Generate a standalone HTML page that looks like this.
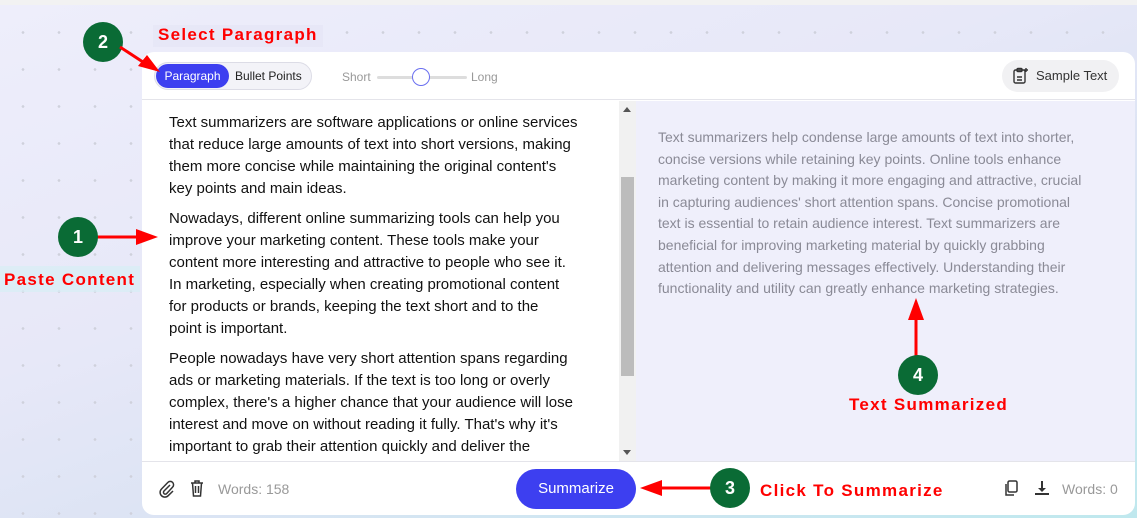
<!DOCTYPE html>
<html><head><style>
*{margin:0;padding:0;box-sizing:border-box}
body{width:1137px;height:518px;overflow:hidden;position:relative;font-family:"Liberation Sans",sans-serif;
background:linear-gradient(160deg,#eeeefb 0%,#e7e8f8 40%,#dde4f4 60%,#bfe8ee 100%);}
.topband{position:absolute;left:0;top:0;width:1137px;height:5px;background:#f2f2f2}
.dots{position:absolute;inset:0;background-image:radial-gradient(circle,#cfd1dc 1.2px,transparent 1.5px);background-size:36px 37px;background-position:5px 14px}
.card{position:absolute;left:142px;top:52px;width:993px;height:463px;background:#fff;border-radius:12px;overflow:hidden}
.hdr{position:absolute;left:0;top:0;width:100%;height:48px;border-bottom:1px solid #e4e4ea}
.tog{position:absolute;left:12px;top:10px;width:158px;height:28px;border:1px solid #dcdce6;border-radius:14px;background:#f3f3f8}
.tog .a{position:absolute;left:1px;top:1px;width:73px;height:24px;border-radius:12px;background:#3d3ff0;color:#fff;font-size:12px;line-height:24px;text-align:center}
.tog .b{position:absolute;left:80px;top:1px;font-size:12px;line-height:24px;color:#222}
.sl{position:absolute;top:18px;font-size:12px;color:#999}
.track{position:absolute;left:235px;top:24px;width:90px;height:3px;background:#ddd;border-radius:2px}
.knob{position:absolute;left:270px;top:16px;width:18px;height:18px;border-radius:50%;border:1.5px solid #6a6ff0;background:#fff}
.samp{position:absolute;right:16px;top:8px;width:117px;height:32px;border-radius:16px;background:#f1f1f3;font-size:13px;color:#333;line-height:32px;padding-left:34px}
.left{position:absolute;left:0;top:49px;width:477px;height:360px;overflow:hidden}
.left p{position:absolute;left:27px;width:450px;font-size:15px;line-height:22px;color:#111;white-space:nowrap}
.sb{position:absolute;left:477px;top:49px;width:17px;height:360px;background:#f1f1f1}
.thumb{position:absolute;left:2px;top:76px;width:13px;height:199px;background:#bcbcbc}
.right{position:absolute;left:494px;top:49px;width:499px;height:360px;background:#efeffb}
.right p{position:absolute;left:22px;top:26px;width:470px;font-size:14px;line-height:21.6px;color:#8a8a96;white-space:nowrap}
.ftr{position:absolute;left:0;top:409px;width:100%;height:54px;border-top:1px solid #e4e4ea}
.btn{position:absolute;left:374px;top:7px;width:120px;height:40px;border-radius:20px;background:#3d3ff0;color:#fff;font-size:15px;text-align:center;line-height:40px}
.w{position:absolute;top:19px;font-size:14px;color:#999}
.ann{position:absolute;font-weight:900;color:#f00;font-size:17px;letter-spacing:1.3px}
.circ{position:absolute;width:40px;height:40px;border-radius:50%;background:#0a6b35;color:#fff;font-weight:bold;font-size:18px;text-align:center;line-height:40px}
</style></head><body>
<div class="topband"></div>
<div class="dots"></div>
<div class="card">
 <div class="hdr">
  <div class="tog"><div class="a">Paragraph</div><div class="b">Bullet Points</div></div>
  <div class="sl" style="left:200px">Short</div>
  <div class="track"></div><div class="knob"></div>
  <div class="sl" style="left:329px">Long</div>
  <div class="samp"><svg style="position:absolute;left:10px;top:7px" width="18" height="18" viewBox="0 0 18 18" fill="none" stroke="#333" stroke-width="1.4"><rect x="2" y="3" width="11" height="13" rx="1.5"/><rect x="5" y="1.5" width="5" height="3" rx="1"/><path d="M5 10h5M5 13h5M14 1v4M12 3h4"/></svg>Sample Text</div>
 </div>
 <div class="left">
  <p style="top:11px">Text summarizers are software applications or online services<br>that reduce large amounts of text into short versions, making<br>them more concise while maintaining the original content's<br>key points and main ideas.</p>
  <p style="top:107px">Nowadays, different online summarizing tools can help you<br>improve your marketing content. These tools make your<br>content more interesting and attractive to people who see it.<br>In marketing, especially when creating promotional content<br>for products or brands, keeping the text short and to the<br>point is important.</p>
  <p style="top:247px">People nowadays have very short attention spans regarding<br>ads or marketing materials. If the text is too long or overly<br>complex, there's a higher chance that your audience will lose<br>interest and move on without reading it fully. That's why it's<br>important to grab their attention quickly and deliver the</p>
 </div>
 <div class="sb"><div style="position:absolute;left:4px;top:6px;border:4px solid transparent;border-bottom:5px solid #555;border-top:0"></div><div class="thumb"></div><div style="position:absolute;left:4px;bottom:6px;border:4px solid transparent;border-top:5px solid #555;border-bottom:0"></div></div>
 <div class="right"><p>Text summarizers help condense large amounts of text into shorter,<br>concise versions while retaining key points. Online tools enhance<br>marketing content by making it more engaging and attractive, crucial<br>in capturing audiences' short attention spans. Concise promotional<br>text is essential to retain audience interest. Text summarizers are<br>beneficial for improving marketing material by quickly grabbing<br>attention and delivering messages effectively. Understanding their<br>functionality and utility can greatly enhance marketing strategies.</p></div>
 <div class="ftr">
  <svg style="position:absolute;left:17px;top:18px" width="16" height="18" viewBox="0 0 16 18" fill="none" stroke="#333" stroke-width="1.5"><path d="M11 5l-6 6a1.8 1.8 0 0 0 2.6 2.6l6-6.5a3.3 3.3 0 0 0-4.7-4.7L2.5 9a4.7 4.7 0 0 0 6.7 6.7L14 11"/></svg>
  <svg style="position:absolute;left:48px;top:18px" width="14" height="17" viewBox="0 0 14 17" fill="none" stroke="#333" stroke-width="1.5"><path d="M1 3h12M5 3V1h4v2M2.5 3l1 13h7l1-13M5.5 6v7M8.5 6v7"/></svg>
  <div class="w" style="left:76px">Words: 158</div>
  <div class="btn">Summarize</div>
  <svg style="position:absolute;left:862px;top:18px" width="14" height="17" viewBox="0 0 14 17" fill="none" stroke="#333" stroke-width="1.5"><rect x="4" y="1" width="9" height="11" rx="1.5"/><path d="M2 4v11h8"/></svg>
  <svg style="position:absolute;left:892px;top:18px" width="16" height="16" viewBox="0 0 16 16" fill="#333"><path d="M7 1h2v7h3l-4 4-4-4h3z"/><rect x="1" y="13" width="14" height="2"/></svg>
  <div class="w" style="left:920px">Words: 0</div>
 </div>
</div>
<div style="position:absolute;left:153px;top:25px;width:170px;height:22px;background:rgba(230,230,245,.7)"></div>
<div class="ann" style="left:158px;top:25px">Select Paragraph</div>
<div class="circ" style="left:83px;top:22px">2</div>
<svg style="position:absolute;left:0;top:0" width="1137" height="518"><g stroke="#f00" stroke-width="3" fill="#f00">
<line x1="120" y1="47" x2="146" y2="64"/><polygon points="160,72 138,66 147,55" stroke="none"/>
<line x1="95" y1="237" x2="137" y2="237"/><polygon points="158,237 136,229 136,245" stroke="none"/>
<line x1="712" y1="488" x2="660" y2="488"/><polygon points="640,488 662,480 662,496" stroke="none"/>
<line x1="916" y1="356" x2="916" y2="318"/><polygon points="916,298 908,320 924,320" stroke="none"/>
</g></svg>
<div class="circ" style="left:58px;top:217px">1</div>
<div style="position:absolute;left:0;top:266px;width:140px;height:26px;background:rgba(215,238,245,.7)"></div>
<div class="ann" style="left:4px;top:270px">Paste Content</div>
<div class="circ" style="left:710px;top:468px">3</div>
<div class="ann" style="left:760px;top:481px">Click To Summarize</div>
<div class="circ" style="left:898px;top:355px">4</div>
<div class="ann" style="left:849px;top:395px">Text Summarized</div>
</body></html>
